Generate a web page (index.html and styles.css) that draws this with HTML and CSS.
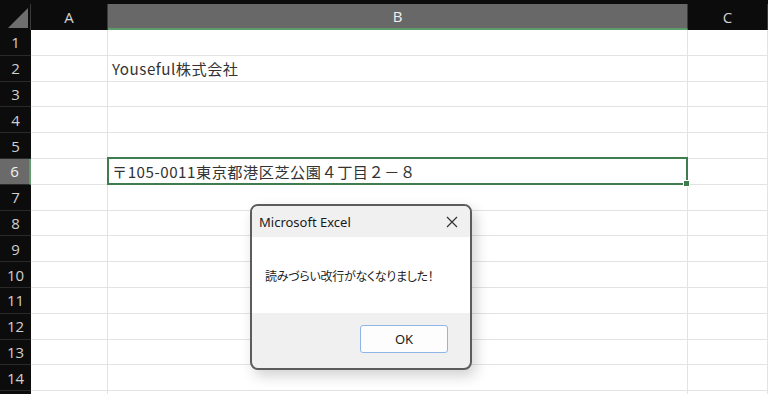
FILE: index.html
```html
<!DOCTYPE html>
<html lang="ja">
<head>
<meta charset="utf-8">
<link rel="stylesheet" href="styles.css">
</head>
<body>
<div class="sheet">
  <div class="colhead">
    <div class="corner"><div class="tri"></div></div>
    <div class="ch">A</div>
    <div class="ch sel">B</div>
    <div class="ch">C</div>
  </div>
  <div class="rows">
    <div class="row"><div class="rh">1</div><div class="c a"></div><div class="c b"></div><div class="c cc"></div></div>
    <div class="row"><div class="rh">2</div><div class="c a"></div><div class="c b"><span class="txt">Youseful株式会社</span></div><div class="c cc"></div></div>
    <div class="row"><div class="rh">3</div><div class="c a"></div><div class="c b"></div><div class="c cc"></div></div>
    <div class="row"><div class="rh">4</div><div class="c a"></div><div class="c b"></div><div class="c cc"></div></div>
    <div class="row"><div class="rh">5</div><div class="c a"></div><div class="c b"></div><div class="c cc"></div></div>
    <div class="row"><div class="rh rsel">6</div><div class="c a"></div><div class="c b active"><span class="txt">〒105-0011東京都港区芝公園４丁目２－８</span><div class="selbox"><div class="handle"></div></div></div><div class="c cc"></div></div>
    <div class="row"><div class="rh">7</div><div class="c a"></div><div class="c b"></div><div class="c cc"></div></div>
    <div class="row"><div class="rh">8</div><div class="c a"></div><div class="c b"></div><div class="c cc"></div></div>
    <div class="row"><div class="rh">9</div><div class="c a"></div><div class="c b"></div><div class="c cc"></div></div>
    <div class="row"><div class="rh">10</div><div class="c a"></div><div class="c b"></div><div class="c cc"></div></div>
    <div class="row"><div class="rh">11</div><div class="c a"></div><div class="c b"></div><div class="c cc"></div></div>
    <div class="row"><div class="rh">12</div><div class="c a"></div><div class="c b"></div><div class="c cc"></div></div>
    <div class="row"><div class="rh">13</div><div class="c a"></div><div class="c b"></div><div class="c cc"></div></div>
    <div class="row"><div class="rh">14</div><div class="c a"></div><div class="c b"></div><div class="c cc"></div></div>
    <div class="row"><div class="rh"></div><div class="c a"></div><div class="c b"></div><div class="c cc"></div></div>
  </div>

  <div class="dialog">
    <div class="dtitle">
      <span class="dname">Microsoft Excel</span>
      <svg class="close" width="12" height="12" viewBox="0 0 12 12"><path d="M1 1 L11 11 M11 1 L1 11" stroke="#333" stroke-width="1.2" fill="none"/></svg>
    </div>
    <div class="dbody">読みづらい改行がなくなりました！</div>
    <div class="dfoot"><div class="okbtn">OK</div></div>
  </div>
</div>
</body>
</html>
```

FILE: styles.css
```css
html, body {
  margin: 0;
  padding: 0;
  width: 768px;
  height: 394px;
  overflow: hidden;
  background: #ffffff;
}
.sheet {
  position: relative;
  width: 768px;
  height: 394px;
  overflow: hidden;
  font-family: "Noto Sans CJK JP", "Noto Sans", sans-serif;
}
.colhead {
  display: grid;
  grid-template-columns: 31px 77px 580px 80px;
  height: 30px;
  padding-top: 4px;
  box-sizing: border-box;
  background: #0c0c0c;
}
.corner {
  background: #0c0c0c;
  border-right: 1px solid #3a3a3a;
  position: relative;
}
.tri {
  position: absolute;
  right: 2px;
  bottom: 2px;
  width: 0;
  height: 0;
  border-left: 20px solid transparent;
  border-bottom: 20px solid #6e6e6e;
}
.ch {
  display: flex;
  align-items: center;
  justify-content: center;
  color: #d4d4d4;
  font-family: "Open Sans", "Noto Sans", sans-serif;
  font-size: 15px;
  border-right: 1px solid #3a3a3a;
  box-sizing: border-box;
}
.ch.sel {
  background: #686868;
  border-bottom: 2px solid #5f9b6a;
  color: #f0f0f0;
}
.rows {
  display: flex;
  flex-direction: column;
}
.row {
  display: grid;
  grid-template-columns: 31px 77px 580px 80px;
  height: 25.8px;
}
.rh {
  background: #0c0c0c;
  color: #d0d0d0;
  font-family: "Open Sans", "Noto Sans", sans-serif;
  font-size: 15px;
  display: flex;
  align-items: center;
  justify-content: center;
  border-bottom: 1px solid #2a2a2a;
  box-sizing: border-box;
}
.rh.rsel {
  background: #6a6a6a;
  color: #f2f2f2;
  border-right: 2px solid #5f9b6a;
}
.c {
  border-right: 1px solid #e3e3e3;
  border-bottom: 1px solid #e3e3e3;
  box-sizing: border-box;
  display: flex;
  align-items: center;
}
.txt {
  padding-left: 4px;
  font-size: 15.2px;
  letter-spacing: 0.5px;
  color: #333333;
  white-space: nowrap;
}
.active {
  position: relative;
}
.selbox {
  position: absolute;
  left: -1px;
  top: -2px;
  right: -1px;
  bottom: -1px;
  border: 2px solid #3f7d4f;
  pointer-events: none;
}
.handle {
  position: absolute;
  right: -4px;
  bottom: -4px;
  width: 5px;
  height: 5px;
  background: #3f7d4f;
  border: 1px solid #ffffff;
}
.dialog {
  position: absolute;
  left: 250px;
  top: 204px;
  width: 222px;
  height: 166px;
  box-sizing: border-box;
  border: 2px solid #5c5c5c;
  border-radius: 8px;
  overflow: hidden;
  display: flex;
  flex-direction: column;
  background: #f0f0f0;
  box-shadow: 4px 6px 14px rgba(0,0,0,0.18);
}
.dtitle {
  height: 31px;
  background: #f0f0f0;
  display: flex;
  align-items: center;
  justify-content: space-between;
  padding: 0 12px 0 7px;
}
.dname {
  font-family: "Noto Sans", "Open Sans", sans-serif;
  font-size: 13px;
  color: #1a1a1a;
}
.close {
  display: block;
}
.dbody {
  height: 76px;
  background: #ffffff;
  display: flex;
  align-items: center;
  padding-left: 13px;
  font-size: 12px;
  letter-spacing: -0.3px;
  color: #222;
  font-feature-settings: "palt";
}
.dfoot {
  flex: 1;
  display: flex;
  justify-content: flex-end;
  align-items: center;
  padding-right: 22px;
  padding-bottom: 4px;
}
.okbtn {
  width: 88px;
  height: 28px;
  box-sizing: border-box;
  border: 1px solid #8fb5e8;
  border-radius: 3px;
  background: #fdfdfd;
  display: flex;
  align-items: center;
  justify-content: center;
  font-family: "Noto Sans", "Open Sans", sans-serif;
  font-size: 13px;
  color: #1a1a1a;
}
```
